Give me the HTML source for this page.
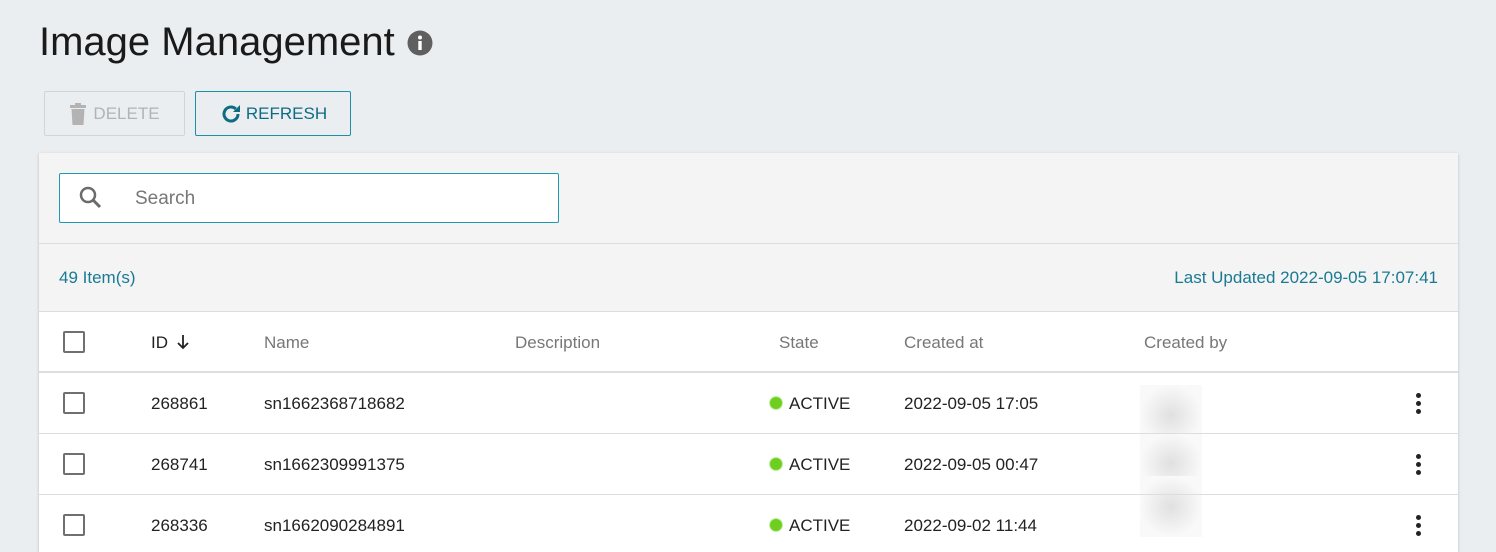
<!DOCTYPE html>
<html><head><style>
*{box-sizing:border-box;margin:0;padding:0}
html,body{width:1496px;height:552px;overflow:hidden}
body{background:#ebeef1;font-family:"Liberation Sans",sans-serif;position:relative}
.a{position:absolute}
h1{position:absolute;left:39px;top:20px;font-size:40px;font-weight:400;color:#1a1a1a;letter-spacing:0}
.btn{position:absolute;top:91px;height:45px;border:1px solid;border-radius:2px;font-size:17px;display:flex;align-items:center;justify-content:center}
.card{position:absolute;left:39px;top:153px;width:1419px;height:420px;background:#fff;box-shadow:0 1px 3px rgba(0,0,0,.2)}
.txt{position:absolute;font-size:17px;color:#222}
.hd{color:#777}
.cb{position:absolute;left:24px;width:22px;height:22px;border:2px solid #707070;border-radius:2px}
.line{position:absolute;left:0;width:1419px;height:1px;background:#ddd}
.dot{position:absolute;width:12px;height:12px;border-radius:50%;background:#6ecf20;box-shadow:0 0 0 1px #c8eeaa}
.kb{position:absolute;left:1377px;width:5px}
.kb i{display:block;width:5px;height:5px;border-radius:50%;background:#222;margin-bottom:3px}
.bl{position:absolute;left:1101px;width:62px;height:61px;background:radial-gradient(ellipse at 50% 50%,#e0e0e0,#f9f9f9 70%)}
</style></head><body>
<h1>Image Management</h1>
<svg class="a" style="left:407px;top:30px" width="26" height="26" viewBox="0 0 26 26"><circle cx="13" cy="13" r="12.5" fill="#5f5f5f"/><rect x="11.3" y="11" width="3.4" height="9" fill="#fff"/><circle cx="13" cy="7.5" r="2" fill="#fff"/></svg>
<div class="btn" style="left:44px;width:141px;border-color:#d2d4d6;color:#b3b3b3;background:#ebeef1">
<svg width="18" height="22" viewBox="0 0 18 22" style="margin-right:6px"><rect x="1" y="2" width="16" height="3" fill="#b3b3b3"/><rect x="6" y="0" width="6" height="3" fill="#b3b3b3"/><path d="M2.5 6h13l-1 16h-11z" fill="#b3b3b3"/></svg>DELETE</div>
<div class="btn" style="left:195px;width:156px;border-color:#1d8fa6;color:#0f6b82;background:#ebeef1">
<svg width="24" height="24" viewBox="0 0 24 24" style="margin-right:3px"><path d="M19 12a7 7 0 1 1-2.2-5.1" fill="none" stroke="#0f6b82" stroke-width="3"/><path d="M21 3v7h-7z" fill="#0f6b82"/></svg>REFRESH</div>
<div class="card">
<div class="a" style="left:0;top:0;width:1419px;height:158px;background:#f4f4f4"></div>
<div class="a" style="left:20px;top:20px;width:500px;height:50px;border:1px solid #1d9ab2;border-radius:2px;background:#fff"></div>
<svg class="a" style="left:39px;top:32px" width="26" height="26" viewBox="0 0 26 26"><circle cx="10" cy="10" r="7" fill="none" stroke="#6b6b6b" stroke-width="2.5"/><path d="M15 15l7 7" stroke="#6b6b6b" stroke-width="3"/></svg>
<div class="txt" style="left:96px;top:35px;font-size:19px;color:#777">Search</div>
<div class="line" style="top:90px"></div>
<div class="txt" style="left:20px;top:115px;color:#1a7a93">49 Item(s)</div>
<div class="txt" style="right:20px;top:115px;color:#1a7a93">Last Updated 2022-09-05 17:07:41</div>
<div class="line" style="top:158px"></div>
<div class="cb" style="top:178px"></div>
<div class="txt" style="left:112px;top:180px">ID</div>
<svg class="a" style="left:136px;top:180px" width="16" height="18" viewBox="0 0 16 18"><path d="M8 2v13M3 10l5 5 5-5" fill="none" stroke="#222" stroke-width="1.8"/></svg>
<div class="txt hd" style="left:225px;top:180px">Name</div>
<div class="txt hd" style="left:476px;top:180px">Description</div>
<div class="txt hd" style="left:740px;top:180px">State</div>
<div class="txt hd" style="left:865px;top:180px">Created at</div>
<div class="txt hd" style="left:1105px;top:180px">Created by</div>
<div class="line" style="top:218px;height:2px"></div>
<div class="bl" style="top:232px"></div>
<div class="bl" style="top:280px"></div>
<div class="bl" style="top:323px"></div>
<div class="cb" style="top:239px"></div>
<div class="txt" style="left:112px;top:241px">268861</div>
<div class="txt" style="left:225px;top:241px">sn1662368718682</div>
<div class="dot" style="left:731px;top:244px"></div>
<div class="txt" style="left:750px;top:241px">ACTIVE</div>
<div class="txt" style="left:865px;top:241px">2022-09-05 17:05</div>
<div class="kb" style="top:240px"><i></i><i></i><i></i></div>
<div class="line" style="top:280px"></div>
<div class="cb" style="top:300px"></div>
<div class="txt" style="left:112px;top:302px">268741</div>
<div class="txt" style="left:225px;top:302px">sn1662309991375</div>
<div class="dot" style="left:731px;top:305px"></div>
<div class="txt" style="left:750px;top:302px">ACTIVE</div>
<div class="txt" style="left:865px;top:302px">2022-09-05 00:47</div>
<div class="kb" style="top:301px"><i></i><i></i><i></i></div>
<div class="line" style="top:341px"></div>
<div class="cb" style="top:361px"></div>
<div class="txt" style="left:112px;top:363px">268336</div>
<div class="txt" style="left:225px;top:363px">sn1662090284891</div>
<div class="dot" style="left:731px;top:366px"></div>
<div class="txt" style="left:750px;top:363px">ACTIVE</div>
<div class="txt" style="left:865px;top:363px">2022-09-02 11:44</div>
<div class="kb" style="top:362px"><i></i><i></i><i></i></div>
</div>
</body></html>
